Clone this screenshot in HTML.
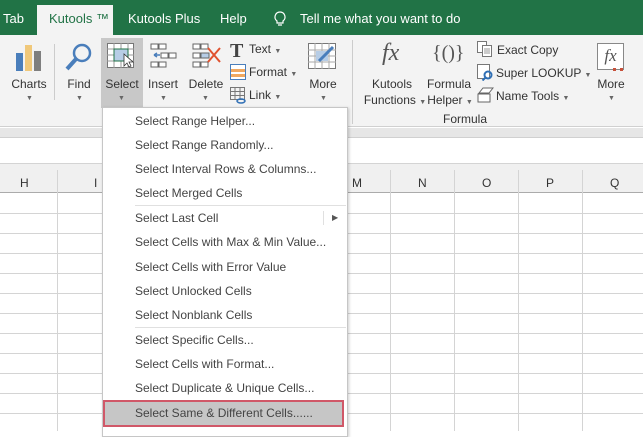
<!DOCTYPE html>
<html><head><style>
*{margin:0;padding:0;box-sizing:border-box}
body{width:643px;height:431px;overflow:hidden;position:relative;background:#fff;font-family:"Liberation Sans",sans-serif;font-size:12px;color:#444}
.a{position:absolute;white-space:nowrap}
.tab{color:#fff;font-size:13px;top:11px}
.lb{font-size:12px;color:#333;text-align:center}
.car{font-size:7px;color:#666}
.mi{position:absolute;left:135px;font-size:12px;color:#444}
.vl{position:absolute;top:193px;width:1px;height:238px;background:#d4d4d4}
.hl{position:absolute;left:0;width:643px;height:1px;background:#d4d4d4}
</style></head><body>
<div class="a" style="left:0;top:0;width:643px;height:35px;background:#217346"></div>
<div class="a" style="left:37px;top:5px;width:76px;height:31px;background:#f3f3f3"></div>
<div class="a tab" style="left:3px">Tab</div>
<div class="a tab" style="left:49px;color:#217346">Kutools ™</div>
<div class="a tab" style="left:128px">Kutools Plus</div>
<div class="a tab" style="left:220px">Help</div>
<svg class="a" style="left:273px;top:11px" width="14" height="16"><path d="M7 1a5 5 0 0 0-3 9v2h6v-2a5 5 0 0 0-3-9zM5 14h4" fill="none" stroke="#fff" stroke-width="1.2"/></svg>
<div class="a tab" style="left:300px">Tell me what you want to do</div>
<div class="a" style="left:0;top:35px;width:643px;height:92px;background:#f3f3f3;border-bottom:1px solid #d0d0d0"></div>
<div class="a" style="left:0;top:128px;width:643px;height:10px;background:#e6e6e6;border-bottom:1px solid #d0d0d0"></div>
<div class="a" style="left:0;top:163px;width:643px;height:30px;background:#f0f0f0;border-top:1px solid #d4d4d4;border-bottom:1px solid #ababab"></div>
<div class="a" style="left:101px;top:38px;width:42px;height:70px;background:#c8c8c8"></div>
<div class="a" style="left:54px;top:44px;width:1px;height:56px;background:#ccc"></div>
<div class="a" style="left:352px;top:40px;width:1px;height:84px;background:#ccc"></div>
<!-- icons -->
<svg class="a" style="left:16px;top:43px" width="26" height="28"><rect x="0" y="10" width="7" height="18" fill="#4a7ebb"/><rect x="9" y="2" width="7" height="26" fill="#f0c87a"/><rect x="18" y="8" width="7" height="20" fill="#7f7f7f"/></svg>
<svg class="a" style="left:64px;top:42px" width="30" height="30"><circle cx="18" cy="11" r="8" fill="none" stroke="#4a7ebb" stroke-width="2.5"/><path d="M12 17L3 27" stroke="#4a7ebb" stroke-width="4"/></svg>
<svg class="a" style="left:107px;top:43px" width="30" height="26"><rect x="0.5" y="0.5" width="26" height="24" fill="#fff" stroke="#777"/><path d="M0 6h27M0 12h27M0 18h27M7 0v25M14 0v25M21 0v25" stroke="#999"/><rect x="7" y="6" width="14" height="12" fill="#b7cde6" stroke="#217346"/><path d="M17 11l0 12 3-3 2 4 2-1-2-4 4 0z" fill="#fff" stroke="#333" stroke-width=".8"/></svg>
<svg class="a" style="left:150px;top:43px" width="28" height="28"><path d="M1 1h7v5H1zM9 1h7v5H9zM11 10h7v5h-7zM19 10h7v5h-7zM1 19h7v5H1zM9 19h7v5H9z" fill="#fff" stroke="#666"/><path d="M4 12h6M4 12l3-2M4 12l3 2" stroke="#4a7ebb" stroke-width="1.5" fill="none"/></svg>
<svg class="a" style="left:192px;top:43px" width="30" height="28"><path d="M1 1h7v5H1zM9 1h7v5H9zM1 19h7v5H1zM9 19h7v5H9zM1 10h7v5H1z" fill="#fff" stroke="#666"/><rect x="9" y="10" width="8" height="5" fill="#b7cde6" stroke="#666"/><path d="M16 5l12 14M28 5L16 19" stroke="#e0522f" stroke-width="2"/></svg>
<div class="a" style="left:230px;top:40px;font-family:'Liberation Serif',serif;font-size:20px;font-weight:bold;color:#444">T</div>
<div class="a" style="left:249px;top:42px;font-size:12px;color:#333">Text <span class="car">▼</span></div>
<svg class="a" style="left:230px;top:64px" width="16" height="16"><rect x=".5" y=".5" width="15" height="15" fill="#fff" stroke="#4a7ebb"/><rect x="1" y="5" width="14" height="3" fill="#f0a860"/><rect x="1" y="10" width="14" height="3" fill="#f0a860"/></svg>
<div class="a" style="left:249px;top:65px;color:#333">Format <span class="car">▼</span></div>
<svg class="a" style="left:230px;top:87px" width="17" height="17"><path d="M.5 .5h14v12H.5zM.5 4.5h14M.5 8.5h14M5 .5v12M10 .5v12" fill="none" stroke="#777"/><ellipse cx="11" cy="14" rx="4" ry="2" fill="none" stroke="#2f6fb5" stroke-width="1.5"/></svg>
<div class="a" style="left:249px;top:88px;color:#333">Link <span class="car">▼</span></div>
<svg class="a" style="left:308px;top:43px" width="30" height="28"><rect x=".5" y=".5" width="27" height="25" fill="#fff" stroke="#777"/><path d="M0 7h28M0 13h28M0 19h28M7 0v26M14 0v26M21 0v26" stroke="#aaa"/><rect x="8" y="8" width="12" height="10" fill="#b7cde6"/><path d="M11 18l14-14" stroke="#4a7ebb" stroke-width="3"/></svg>
<div class="a" style="left:382px;top:40px;font-family:'Liberation Serif',serif;font-style:italic;font-size:24px;color:#555">fx</div>
<div class="a" style="left:432px;top:42px;font-family:'Liberation Serif',serif;font-size:20px;color:#555">{()}</div>
<svg class="a" style="left:477px;top:41px" width="16" height="16"><path d="M.5 .5h9v11h-9z" fill="#fff" stroke="#777"/><path d="M5.5 4.5h9v11h-9z" fill="#fff" stroke="#777"/><path d="M7 8h6M7 10h6M7 12h6" stroke="#999"/></svg>
<div class="a" style="left:497px;top:43px;color:#333">Exact Copy</div>
<svg class="a" style="left:477px;top:64px" width="17" height="17"><rect x=".5" y=".5" width="12" height="14" fill="#fff" stroke="#777"/><circle cx="11" cy="11" r="3.5" fill="none" stroke="#2f6fb5" stroke-width="2"/><path d="M8.5 13.5l-3 3" stroke="#2f6fb5" stroke-width="2"/></svg>
<div class="a" style="left:496px;top:66px;color:#333">Super LOOKUP <span class="car">▼</span></div>
<svg class="a" style="left:477px;top:87px" width="17" height="16"><path d="M2 6l4-5h10l-4 5zM1 7h12v8H1z" fill="#fff" stroke="#666"/></svg>
<div class="a" style="left:496px;top:89px;color:#333">Name Tools <span class="car">▼</span></div>
<div class="a" style="left:597px;top:43px;width:27px;height:27px;border:1px solid #888;background:#fff;font-family:'Liberation Serif',serif;font-style:italic;font-size:17px;color:#555;text-align:center;line-height:24px">fx</div>
<div class="a" style="left:613px;top:68px;width:10px;height:3px;border-top:3px dotted #c8503a"></div>
<div class="a lb" style="left:9px;top:77px;width:40px">Charts</div>
<div class="a lb" style="left:59px;top:77px;width:40px">Find</div>
<div class="a lb" style="left:101px;top:77px;width:42px">Select</div>
<div class="a lb" style="left:143px;top:77px;width:40px">Insert</div>
<div class="a lb" style="left:185px;top:77px;width:42px">Delete</div>
<div class="a lb" style="left:303px;top:77px;width:40px">More</div>
<div class="a lb" style="left:362px;top:77px;width:60px">Kutools</div>
<div class="a lb" style="left:360px;top:93px;width:70px">Functions <span class="car">▼</span></div>
<div class="a lb" style="left:424px;top:77px;width:50px">Formula</div>
<div class="a lb" style="left:422px;top:93px;width:56px">Helper <span class="car">▼</span></div>
<div class="a lb" style="left:591px;top:77px;width:40px">More</div>
<div class="a lb" style="left:443px;top:112px;width:40px">Formula</div>
<div class="a car" style="left:26px;top:95px">▼</div>
<div class="a car" style="left:76px;top:95px">▼</div>
<div class="a car" style="left:118px;top:95px">▼</div>
<div class="a car" style="left:160px;top:95px">▼</div>
<div class="a car" style="left:202px;top:95px">▼</div>
<div class="a car" style="left:320px;top:95px">▼</div>
<div class="a car" style="left:608px;top:95px">▼</div>
<!-- grid -->
<div class="vl" style="left:57px;top:170px;height:261px"></div>
<div class="vl" style="left:134px;top:170px;height:261px"></div>
<div class="vl" style="left:390px;top:170px;height:261px"></div>
<div class="vl" style="left:454px;top:170px;height:261px"></div>
<div class="vl" style="left:518px;top:170px;height:261px"></div>
<div class="vl" style="left:582px;top:170px;height:261px"></div>
<div class="hl" style="top:213px"></div><div class="hl" style="top:233px"></div><div class="hl" style="top:253px"></div><div class="hl" style="top:273px"></div><div class="hl" style="top:293px"></div><div class="hl" style="top:313px"></div><div class="hl" style="top:333px"></div><div class="hl" style="top:353px"></div><div class="hl" style="top:373px"></div><div class="hl" style="top:393px"></div><div class="hl" style="top:413px"></div>
<div class="a" style="left:20px;top:176px;color:#333">H</div>
<div class="a" style="left:94px;top:176px;color:#333">I</div>
<div class="a" style="left:352px;top:176px;color:#333">M</div>
<div class="a" style="left:418px;top:176px;color:#333">N</div>
<div class="a" style="left:482px;top:176px;color:#333">O</div>
<div class="a" style="left:546px;top:176px;color:#333">P</div>
<div class="a" style="left:610px;top:176px;color:#333">Q</div>
<!-- menu -->
<div class="a" style="left:102px;top:107px;width:246px;height:330px;background:#fff;border:1px solid #c6c6c6;box-shadow:1px 1px 3px rgba(0,0,0,.2)"></div>
<div class="a" style="left:135px;top:205px;width:211px;height:1px;background:#e0e0e0"></div>
<div class="a" style="left:135px;top:327px;width:211px;height:1px;background:#e0e0e0"></div>
<div class="a" style="left:323px;top:211px;width:1px;height:14px;background:#e0e0e0"></div>
<div class="a" style="left:332px;top:213px;font-size:8px;color:#555">▶</div>
<div class="a" style="left:103px;top:400px;width:241px;height:27px;background:#c6c6c6;border:2px solid #d05868"></div>
<div class="mi" style="top:114px">Select Range Helper...</div>
<div class="mi" style="top:138px">Select Range Randomly...</div>
<div class="mi" style="top:162px">Select Interval Rows &amp; Columns...</div>
<div class="mi" style="top:186px">Select Merged Cells</div>
<div class="mi" style="top:211px">Select Last Cell</div>
<div class="mi" style="top:235px">Select Cells with Max &amp; Min Value...</div>
<div class="mi" style="top:260px">Select Cells with Error Value</div>
<div class="mi" style="top:284px">Select Unlocked Cells</div>
<div class="mi" style="top:308px">Select Nonblank Cells</div>
<div class="mi" style="top:333px">Select Specific Cells...</div>
<div class="mi" style="top:357px">Select Cells with Format...</div>
<div class="mi" style="top:381px">Select Duplicate &amp; Unique Cells...</div>
<div class="mi" style="top:406px">Select Same &amp; Different Cells......</div>
</body></html>
